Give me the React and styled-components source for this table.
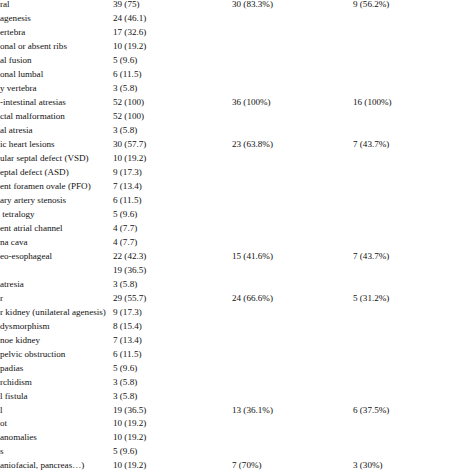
import styled, { createGlobalStyle } from "styled-components";

const Global = createGlobalStyle`
  html, body {
    margin: 0;
    padding: 0;
    background: #fff;
  }
`;

const Table = styled.div`
  width: 474px;
  height: 474px;
  overflow: hidden;
  display: grid;
  grid-template-columns: 113px 119px 121px 1fr;
  grid-auto-rows: 13.98px;
  align-content: start;
  font-family: "Liberation Serif", "Times New Roman", serif;
  font-size: 9.1px;
  line-height: 13.98px;
  color: #111;
  margin-top: -1.6px;
`;

const Cell = styled.div`
  white-space: nowrap;
`;

const rows = [
  ["ral", "39 (75)", "30 (83.3%)", "9 (56.2%)"],
  ["agenesis", "24 (46.1)"],
  ["ertebra", "17 (32.6)"],
  ["onal or absent ribs", "10 (19.2)"],
  ["al fusion", "5 (9.6)"],
  ["onal lumbal", "6 (11.5)"],
  ["y vertebra", "3 (5.8)"],
  ["-intestinal atresias", "52 (100)", "36 (100%)", "16 (100%)"],
  ["ctal malformation", "52 (100)"],
  ["al atresia", "3 (5.8)"],
  ["ic heart lesions", "30 (57.7)", "23 (63.8%)", "7 (43.7%)"],
  ["ular septal defect (VSD)", "10 (19.2)"],
  ["eptal defect (ASD)", "9 (17.3)"],
  ["ent foramen ovale (PFO)", "7 (13.4)"],
  ["ary artery stenosis", "6 (11.5)"],
  ["\u00a0tetralogy", "5 (9.6)"],
  ["ent atrial channel", "4 (7.7)"],
  ["na cava", "4 (7.7)"],
  ["eo-esophageal", "22 (42.3)", "15 (41.6%)", "7 (43.7%)"],
  ["", "19 (36.5)"],
  ["atresia", "3 (5.8)"],
  ["r", "29 (55.7)", "24 (66.6%)", "5 (31.2%)"],
  ["r kidney (unilateral agenesis)", "9 (17.3)"],
  ["dysmorphism", "8 (15.4)"],
  ["noe kidney", "7 (13.4)"],
  ["pelvic obstruction", "6 (11.5)"],
  ["padias", "5 (9.6)"],
  ["rchidism", "3 (5.8)"],
  ["l fistula", "3 (5.8)"],
  ["l", "19 (36.5)", "13 (36.1%)", "6 (37.5%)"],
  ["ot", "10 (19.2)"],
  ["anomalies", "10 (19.2)"],
  ["s", "5 (9.6)"],
  ["aniofacial, pancreas\u2026)", "10 (19.2)", "7 (70%)", "3 (30%)"],
];

export default function App() {
  return (
    <>
      <Global />
      <Table>
        {rows.map((r, i) =>
          [0, 1, 2, 3].map((c) => <Cell key={i + "-" + c}>{r[c] || ""}</Cell>)
        )}
      </Table>
    </>
  );
}
